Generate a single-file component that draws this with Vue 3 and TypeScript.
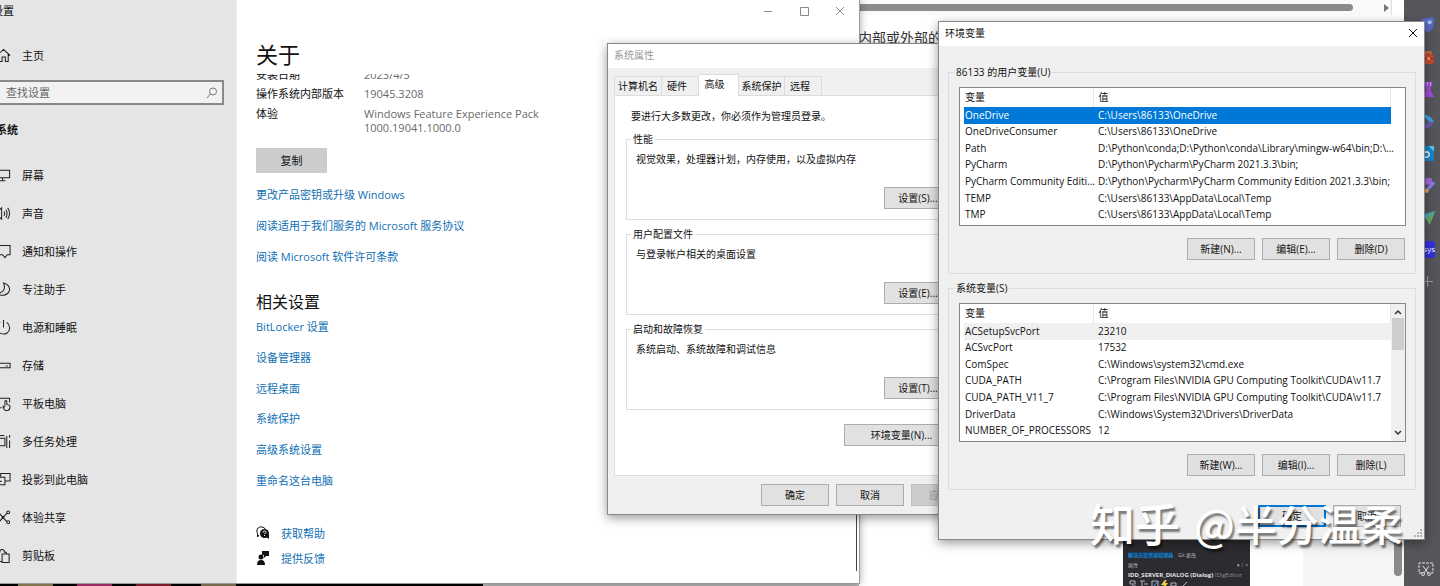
<script setup lang="ts">
import { ref } from 'vue'

interface NavItem { label: string; icon: string }
interface Variable { name: string; value: string }
interface Group { legend: string; note: string; button: string }

const keyword = ref('')

const homeIcon = 'M1 8 8 1.500 15 8M3 6.500V14.500H6.500V9.500H10V14.500H13V6.500'

const navItems: NavItem[] = [
  { label: '屏幕', icon: 'M0 2.500H14.500V10.500H0ZM7 10.500V13M4 13.500H10' },
  { label: '声音', icon: 'M0 5.500H2L6 2V14L2 10.500H0M8.500 6Q10 8 8.500 10.500M10.500 4Q13 8 10.500 12.500M12.500 2Q16.500 8 12.500 14' },
  { label: '通知和操作', icon: 'M0 1.500H15V11.500H12L9.500 14.500L7 11.500H0' },
  { label: '专注助手', icon: 'M8 1C13 2 15.500 6 14 10C12.500 14 6 16 1 12C7 12 11 8 8 1Z' },
  { label: '电源和睡眠', icon: 'M8 0V8M4.500 2.500C0 5 0 12 5 14.300C10 16.500 15 13 14.500 8C14.300 5.500 13 3.500 11.500 2.500' },
  { label: '存储', icon: 'M0 5.500H15V10.500H0ZM10.500 8.500H12.500' },
  { label: '平板电脑', icon: 'M0 2.500H14.500V7M0 12.500H6M9.500 11V5.500Q10.500 4 11.500 5.500V9L14.500 10Q16 14 12.500 15.500H10Q7 13 7.500 11L9.500 12' },
  { label: '多任务处理', icon: 'M0 4.500H9.500V12.500H0M11.500 2V15M0 1.500H9M14.500 1V4M14.500 7V15' },
  { label: '投影到此电脑', icon: 'M5 6V1.500H15V9.500H9M0 5.500H9.500V13.500H0M2 10H6' },
  { label: '体验共享', icon: 'M3 3 12 13M12 3 3 13M11.500 2.500A1.500 1.500 0 1 1 14.500 2.500A1.500 1.500 0 1 1 11.500 2.500M11.500 13A1.500 1.500 0 1 1 14.500 13A1.500 1.500 0 1 1 11.500 13M6.500 8A1 1 0 1 1 8.500 8A1 1 0 1 1 6.500 8' },
  { label: '剪贴板', icon: 'M1 14.500H6M1 4.500V14.500M1 4.500H4Q4 1.500 6.500 1.500T9 4.500H11V6M6.500 6.500H14V15.500H6.500Z' }
]

const licenceLinks = ['更改产品密钥或升级 Windows', '阅读适用于我们服务的 Microsoft 服务协议', '阅读 Microsoft 软件许可条款']
const relatedLinks = ['BitLocker 设置', '设备管理器', '远程桌面', '系统保护', '高级系统设置', '重命名这台电脑']
const tabs = ['计算机名', '硬件', '高级', '系统保护', '远程']

const groups: Group[] = [
  { legend: '性能', note: '视觉效果，处理器计划，内存使用，以及虚拟内存', button: '设置(S)...' },
  { legend: '用户配置文件', note: '与登录帐户相关的桌面设置', button: '设置(E)...' },
  { legend: '启动和故障恢复', note: '系统启动、系统故障和调试信息', button: '设置(T)...' }
]

const userVars: Variable[] = [
  { name: 'OneDrive', value: 'C:\\Users\\86133\\OneDrive' },
  { name: 'OneDriveConsumer', value: 'C:\\Users\\86133\\OneDrive' },
  { name: 'Path', value: 'D:\\Python\\conda;D:\\Python\\conda\\Library\\mingw-w64\\bin;D:\\...' },
  { name: 'PyCharm', value: 'D:\\Python\\Pycharm\\PyCharm 2021.3.3\\bin;' },
  { name: 'PyCharm Community Editi...', value: 'D:\\Python\\Pycharm\\PyCharm Community Edition 2021.3.3\\bin;' },
  { name: 'TEMP', value: 'C:\\Users\\86133\\AppData\\Local\\Temp' },
  { name: 'TMP', value: 'C:\\Users\\86133\\AppData\\Local\\Temp' }
]

const systemVars: Variable[] = [
  { name: 'ACSetupSvcPort', value: '23210' },
  { name: 'ACSvcPort', value: '17532' },
  { name: 'ComSpec', value: 'C:\\Windows\\system32\\cmd.exe' },
  { name: 'CUDA_PATH', value: 'C:\\Program Files\\NVIDIA GPU Computing Toolkit\\CUDA\\v11.7' },
  { name: 'CUDA_PATH_V11_7', value: 'C:\\Program Files\\NVIDIA GPU Computing Toolkit\\CUDA\\v11.7' },
  { name: 'DriverData', value: 'C:\\Windows\\System32\\Drivers\\DriverData' },
  { name: 'NUMBER_OF_PROCESSORS', value: '12' }
]

const sections = [
  { legend: '86133 的用户变量(U)', rows: userVars, selected: true, scroll: false, buttons: ['新建(N)...', '编辑(E)...', '删除(D)'] },
  { legend: '系统变量(S)', rows: systemVars, selected: false, scroll: true, buttons: ['新建(W)...', '编辑(I)...', '删除(L)'] }
]
</script>

<template>
  <div class="desktop">
    <div class="browser">
      <div class="document">
        <div class="hscroll">
          <span class="hthumb"></span>
          <svg width="8" height="8" viewBox="0 0 8 8"><path d="M1 0 6 4 1 8Z" fill="#777" /></svg>
        </div>
        <p class="article">内部或外部的命令</p>
        <div class="gutter"></div>
        <div class="vscroll"></div>
        <div class="ide">
          <div class="ide-tabs"><span class="ide-active">解决方案资源管理器</span><span>Git 更改</span></div>
          <div class="ide-row"><span>属性</span><span>▾ ⊺ ×</span></div>
          <div class="ide-row ide-name"><span><b>IDD_SERVER_DIALOG (Dialog)</b> IDlgEditor</span></div>
          <svg width="60" height="8" viewBox="0 0 60 8" fill="none" stroke="#b5b5c0">
            <path d="M2 1H7V4H2ZM4 6H8M12 1H17M14 1V7M16 4H20M24 1H30V7H24Z" /><path d="M26 6 30 1" stroke="#5aa9e6" />
            <path d="M38 0 35 4H38L35 8" stroke="#f2cf3c" stroke-width="2" /><path d="M43 3H48V6H43ZM54 7 59 2" />
          </svg>
        </div>
      </div>
      <div class="rail">
        <div class="apps">
          <svg viewBox="0 0 16 16"><path d="M3 2 14 0Q17 7 12 13L8 15Z" fill="#5868c4" /><circle cx="11" cy="5" r="2" fill="#9cc5ef" /></svg>
          <svg viewBox="0 0 16 16"><rect x="1" y="5" width="14" height="9" rx="3" fill="#c8482c" /><path d="M7 5V3H12V5" fill="none" stroke="#e0683b" stroke-width="2" /><path d="M6 9H15" stroke="#8f2d1b" /><circle cx="10" cy="9" r="1.500" fill="#ef9a72" /></svg>
          <svg viewBox="0 0 16 16"><path d="M6 1H14L12 5V9L15 15H5L8 9Z" fill="#a04be0" /><path d="M9 1V4M12 1V5" stroke="#d898f4" /></svg>
          <svg viewBox="0 0 16 16"><path d="M4 1Q13 2 15 9L10 8Z" fill="#39a5df" /><path d="M14 8Q13 15 4 15L9 9Z" fill="#7158b4" /></svg>
          <svg viewBox="0 0 16 16"><rect x="2" y="1" width="13" height="14" rx="1" fill="#1684cc" /><circle cx="8" cy="9" r="2.500" fill="none" stroke="#d6efff" stroke-width="1.500" /><path d="M10 1H15V6Z" fill="#54c6f1" /></svg>
          <svg viewBox="0 0 16 16"><rect x="7" y="1" width="6" height="6" rx="1" fill="#a668e3" /><path d="M15 5 7 14" stroke="#8c7bed" stroke-width="3" /><circle cx="8" cy="13" r="2" fill="#e5a64b" /></svg>
          <svg viewBox="0 0 16 16"><path d="M1 6 16 2 11 15 7 9Z" fill="#4ba9c6" /><path d="M8 9 16 2 11 15Z" fill="#6fa653" /></svg>
          <span class="sys">sys</span>
          <svg viewBox="0 0 16 16"><path d="M9 3V13M4 8H14" stroke="#a5a6aa" /></svg>
        </div>
        <svg class="snip" viewBox="0 0 16 16" fill="none" stroke="#dddde0"><path d="M4 12H1V2H15V12H12" stroke-dasharray="3 1" /><path d="M5 5 10 12M11 5 6 12" /><circle cx="5" cy="13" r="1.500" /><circle cx="11" cy="13" r="1.500" /></svg>
      </div>
    </div>

    <div class="taskline"><i class="c1"></i><i class="c2"></i><i class="c3"></i><i class="c4"></i></div>

    <section class="settings" aria-label="设置">
      <aside class="sidebar">
        <p class="app-title">设置</p>
        <a class="nav-item home" href="#"><svg viewBox="0 0 16 16"><path :d="homeIcon" /></svg>主页</a>
        <label class="search">
          <input v-model="keyword" type="text" placeholder="查找设置" aria-label="查找设置" />
          <svg viewBox="0 0 12 12"><circle cx="7" cy="4.500" r="3.500" /><path d="M4.500 7 1 11" /></svg>
        </label>
        <h2>系统</h2>
        <nav>
          <a v-for="item in navItems" :key="item.label" class="nav-item" href="#">
            <svg viewBox="0 0 16 16"><path :d="item.icon" /></svg>{{ item.label }}
          </a>
        </nav>
      </aside>
      <main class="about">
        <div class="controls">
          <button aria-label="最小化"><svg viewBox="0 0 10 10"><path d="M1 5.500H9" /></svg></button>
          <button aria-label="最大化"><svg viewBox="0 0 10 10"><path d="M1.500 1.500H9.500V9.500H1.500Z" /></svg></button>
          <button aria-label="关闭"><svg viewBox="0 0 10 10"><path d="M1 1 9 9M9 1 1 9" /></svg></button>
        </div>
        <h1>关于</h1>
        <div class="scroll-area">
          <dl>
            <dt>安装日期</dt><dd>2023/4/5</dd>
            <dt>操作系统内部版本</dt><dd>19045.3208</dd>
            <dt class="tall">体验</dt><dd class="tall">Windows Feature Experience Pack<br />1000.19041.1000.0</dd>
          </dl>
          <button class="copy">复制</button>
          <div class="links licence"><a v-for="l in licenceLinks" :key="l" href="#">{{ l }}</a></div>
          <h3>相关设置</h3>
          <div class="links related"><a v-for="l in relatedLinks" :key="l" href="#">{{ l }}</a></div>
          <div class="help">
            <a href="#">
              <svg viewBox="0 0 14 14"><path d="M3 9 1.500 11V7.500Q0 5 1.500 2.500Q4-.5 8 1.500L9 3" fill="none" stroke="#111" /><circle cx="8.500" cy="7.500" r="4.500" fill="#111" /><path d="M10 11 13 13V8Z" fill="#111" /><path d="M7 6.500Q7 5 8.500 5T10 6.500L8.500 8M8.500 9V10" fill="none" stroke="#fff" /></svg>获取帮助</a>
            <a href="#">
              <svg viewBox="0 0 14 14" fill="#111"><circle cx="5" cy="6" r="2.500" /><path d="M1 14Q1 9 5 9T9 14ZM6 0H13V5H10L8 7V4H6Z" /></svg>提供反馈</a>
          </div>
        </div>
      </main>
      <span class="edge-scroll"></span>
    </section>

    <section class="dialog properties" aria-label="系统属性">
      <header><span>系统属性</span></header>
      <div class="tabs" role="tablist">
        <button v-for="t in tabs" :key="t" role="tab" :aria-selected="t === '高级'" :class="{ active: t === '高级' }">{{ t }}</button>
      </div>
      <div class="panel">
        <p>要进行大多数更改，你必须作为管理员登录。</p>
        <fieldset v-for="g in groups" :key="g.legend">
          <legend>{{ g.legend }}</legend>
          <span>{{ g.note }}</span>
          <button class="push">{{ g.button }}</button>
        </fieldset>
        <button class="push wide">环境变量(N)...</button>
      </div>
      <footer>
        <button class="push">确定</button>
        <button class="push">取消</button>
        <button class="push" disabled>应用(A)</button>
      </footer>
    </section>

    <section class="dialog env" aria-label="环境变量">
      <header>
        <span>环境变量</span>
        <button aria-label="关闭"><svg viewBox="0 0 10 10"><path d="M1 1 9 9M9 1 1 9" /></svg></button>
      </header>
      <fieldset v-for="s in sections" :key="s.legend">
        <legend>{{ s.legend }}</legend>
        <div class="list">
          <table>
            <thead><tr><th scope="col">变量</th><th scope="col">值</th></tr></thead>
            <tbody>
              <tr v-for="(v, i) in s.rows" :key="v.name" :class="{ picked: i === 0 && s.selected, hot: i === 0 && !s.selected }">
                <td>{{ v.name }}</td><td>{{ v.value }}</td>
              </tr>
            </tbody>
          </table>
          <div class="bar" :class="{ track: s.scroll }">
            <template v-if="s.scroll">
              <svg viewBox="0 0 8 6"><path d="M1 5 4 2 7 5" /></svg>
              <span class="thumb"></span>
              <svg viewBox="0 0 8 6"><path d="M1 1 4 4 7 1" /></svg>
            </template>
          </div>
        </div>
        <div class="actions"><button v-for="b in s.buttons" :key="b" class="push">{{ b }}</button></div>
      </fieldset>
      <footer>
        <button class="push primary">确定</button>
        <button class="push">取消</button>
      </footer>
      <svg class="grip" viewBox="0 0 8 8" fill="#b0b0b0"><path d="M6 0H8V2H6ZM3 3H5V5H3ZM6 3H8V5H6ZM0 6H2V8H0ZM3 6H5V8H3ZM6 6H8V8H6Z" /></svg>
    </section>

    <div class="watermark"><span class="brand">知乎</span><span>@半分温柔</span></div>
  </div>
</template>

<style>
html, body { margin: 0; overflow: hidden; }
</style>

<style scoped>
* { box-sizing: border-box; }
.desktop { position: relative; height: 100vh; overflow: hidden; background: #fff; color: #111; font-family: "Open Sans", "Noto Sans CJK SC", sans-serif; font-size: 11px; }
p, h1, h2, h3, dl, dd { margin: 0; }
button, input { font: inherit; color: inherit; }
button { padding: 0; border: 0; background: none; }
a { color: inherit; text-decoration: none; }
svg { flex: none; }

.browser { display: flex; height: 100%; }
.document { position: relative; flex: 1; background: #fff; }
.hscroll { display: flex; align-items: center; justify-content: space-between; height: 15px; margin-right: 12px; padding-left: 800px; background: #fafafa; border-right: 1px solid #ddd; }
.hthumb { flex: 1; height: 7px; margin-right: 30px; border-radius: 0 4px 4px 0; background: #8b8b8b; }
.article { margin: 13px 0 0 858px; font-size: 14px; line-height: 20px; color: #333; }
.gutter { position: absolute; right: 0; bottom: 0; width: 101px; height: 48px; background: #f5f5f5; }
.vscroll { position: absolute; right: 2px; bottom: 10px; width: 8px; height: 40px; border-radius: 4px; background: #8b8b8b; }
.ide { position: absolute; right: 154px; bottom: 0; width: 127px; height: 46px; padding: 10px 2px 0 5px; overflow: hidden; background: #2b2b30; color: #b9b9bd; font-size: 5px; line-height: 10px; }
.ide-tabs { display: flex; gap: 5px; }
.ide-active { color: #2b9be8; background: #143f60; line-height: 6px; margin: 2px 0; }
.ide-row { display: flex; justify-content: space-between; }
.ide-name { font-size: 6px; color: #8d8d92; }
.ide-name b { color: #e4e4e6; }
.ide svg { display: block; }
.rail { display: flex; flex-direction: column; justify-content: space-between; width: 36px; padding: 17px 5px 9px 14px; background: #55565b; }
.apps { display: grid; gap: 15px; }
.apps svg, .sys { width: 17px; height: 17px; }
.sys { border-radius: 2px; background: #3131dc; color: #fff; font-size: 8px; line-height: 16px; text-align: right; }
.snip { width: 16px; height: 16px; }

.taskline { position: absolute; left: 0; bottom: 0; display: flex; gap: 24px; width: 483px; height: 3px; padding-left: 18px; background: #000; box-shadow: 376px 0 #bbb; }
.taskline i { height: 2px; width: 35px; align-self: end; background: #95865a; }
.taskline .c2 { background: #b23070; }
.taskline .c3 { background: #8d2032; }
.taskline .c4 { margin-left: 6px; background: #877b58; }

.settings { position: absolute; left: -20px; top: 0; display: flex; width: 880px; height: 584px; background: #fff; border-right: 1px solid #999; border-bottom: 1px solid #999; box-shadow: 0 0 8px rgba(0, 0, 0, .35); }
.sidebar { width: 257px; background: #e5e5e5; border-right: 1px solid #eee; }
.app-title { padding-left: 12px; line-height: 22px; }
.nav-item { display: flex; align-items: center; gap: 11px; height: 38px; padding-left: 16px; }
.nav-item svg { width: 15px; height: 15px; fill: none; stroke: #222; stroke-width: 1.100; }
.home { margin-top: 14px; }
.search { display: flex; align-items: center; height: 25px; margin: 6px 12px 0 16px; padding: 0 4px 0 8px; border: 2px solid #8a8a8a; background: #f2f2f2; }
.search input { flex: 1; min-width: 0; height: 19px; padding: 0; border: 0; outline: 0; background: none; }
.search input::placeholder { color: #666; opacity: 1; }
.search svg { width: 12px; height: 12px; fill: none; stroke: #777; }
h2 { margin: 13px 0 14px; padding-left: 16px; font-size: 11px; line-height: 24px; }

.about { flex: 1; padding-left: 19px; }
.controls { display: flex; justify-content: flex-end; gap: 26px; height: 22px; padding-right: 14px; }
.controls button { display: flex; align-items: center; width: 10px; }
.controls svg, .env header svg { width: 10px; height: 10px; fill: none; stroke: #888; }
h1 { margin-top: 17px; font-size: 22px; font-weight: 400; line-height: 30px; }
.scroll-area { margin-top: 5px; overflow: hidden; }
dl { display: grid; grid-template-columns: 108px 1fr; margin-top: -9px; line-height: 19px; }
dd { color: #6a6a6a; }
.tall { margin-top: 4px; line-height: 14px; }
.copy { display: block; width: 71px; height: 25px; margin-top: 13px; padding-bottom: 2px; background: #ccc; }
.links { display: grid; grid-auto-rows: 1fr; align-items: center; justify-items: start; color: #0f6fb4; }
.licence { min-height: 92px; margin-top: 6px; }
h3 { margin-top: 23px; font-size: 16px; font-weight: 400; line-height: 17px; }
.related { min-height: 184px; }
.help { display: grid; margin-top: 25px; color: #0f6fb4; }
.help a { display: flex; align-items: center; gap: 11px; height: 25px; }
.help svg { width: 14px; height: 14px; }
.edge-scroll { position: absolute; right: 2px; bottom: 12px; width: 1px; height: 58px; background: #444; }

.dialog { position: absolute; background: #f0f0f0; border: 1px solid #888; box-shadow: 0 3px 10px rgba(0, 0, 0, .4); font-size: 10px; }
.dialog header { display: flex; align-items: center; justify-content: space-between; height: 24px; padding: 0 6px 3px; background: #fff; }
.dialog fieldset { min-width: 0; margin: 0; padding: 0; border: 1px solid #dcdcdc; }
.dialog legend { padding: 0 2px; line-height: 14px; }
.push { width: 68px; height: 22px; padding-bottom: 2px; border: 1px solid #adadad; background: #e1e1e1; white-space: nowrap; }
.push:disabled { background: #ccc; border-color: #bfbfbf; color: #999; }

.properties { left: 607px; top: 43px; width: 379px; padding: 0 6px 8px; }
.properties header { margin: 0 -6px; color: #999; }
.tabs { display: flex; align-items: flex-end; height: 27px; }
.tabs button { width: 46px; height: 19px; padding-bottom: 1px; border: 1px solid #dcdcdc; border-bottom: 0; border-left: 0; }
.tabs button:first-child { width: 48px; border-left: 1px solid #dcdcdc; }
.tabs button:nth-child(2), .tabs button:nth-child(5) { width: 37px; padding-right: 6px; }
.tabs .active { width: 40px; height: 22px; padding: 0 8px 4px 0; margin-bottom: -1px; background: #fff; }
.panel { height: 381px; padding: 11px 12px 0 11px; border: 1px solid #dcdcdc; background: #fff; }
.panel p { padding-left: 5px; line-height: 18px; }
.panel fieldset { display: flow-root; height: 88px; margin-top: 7px; }
.panel legend { margin-left: 4px; }
.panel fieldset span { display: block; margin-left: 9px; line-height: 26px; }
.panel .push { display: block; margin: 15px 13px 0 auto; }
.panel .wide { width: 109px; margin-top: 14px; padding-left: 6px; }
.properties footer { display: flex; justify-content: flex-end; gap: 7px; margin-top: 8px; }

.env { left: 938px; top: 21px; width: 487px; min-height: 519px; padding: 0 8px 12px 9px; }
.env header { margin: 0 -8px 19px -9px; }
.env header svg { display: block; stroke: #111; }
.env fieldset { margin-bottom: 7px; padding: 8px 9px 13px 10px; }
.env legend { margin-left: -5px; }
.list { display: grid; grid-template-columns: minmax(0, 1fr) 14px; height: 139px; padding-left: 4px; border: 1px solid #828790; background: #fff; }
table { width: 100%; height: 135px; border-collapse: collapse; table-layout: fixed; text-align: left; }
th, td { padding: 0 0 1px 5px; line-height: 14px; white-space: nowrap; }
th { height: 19px; font-weight: 400; border-right: 1px solid #e5e5e5; }
td { padding-left: 1px; }
th:first-child { width: 129px; padding-left: 1px; }
td:last-child { padding-left: 5px; }
.picked { background: #0078d7; color: #fff; }
.hot { background: #f0f0f0; }
.bar { display: flex; flex-direction: column; align-items: center; padding: 4px 0; }
.track { background: #f0f0f0; }
.bar svg { width: 8px; height: 8px; fill: none; stroke: #333; stroke-width: 1.500; }
.thumb { width: 12px; height: 32px; margin: 2px 0 auto; background: #cdcdcd; }
.actions { display: flex; justify-content: flex-end; gap: 7px; margin-top: 12px; padding-right: 1px; }
.env footer { display: flex; justify-content: flex-end; gap: 7px; margin-top: 15px; padding-right: 15px; }
.primary { border: 2px solid #0078d7; }
.grip { position: absolute; right: 2px; bottom: 2px; width: 8px; height: 8px; }

.watermark { position: absolute; left: 1090px; top: 495px; display: flex; align-items: center; gap: 14px; color: #fff; font-family: "Noto Sans CJK SC", sans-serif; font-size: 42px; line-height: 56px; font-weight: 500; white-space: nowrap; text-shadow: 2px 3px 2px rgba(0, 0, 0, .5); pointer-events: none; }
.brand { font-size: 45px; }
</style>
